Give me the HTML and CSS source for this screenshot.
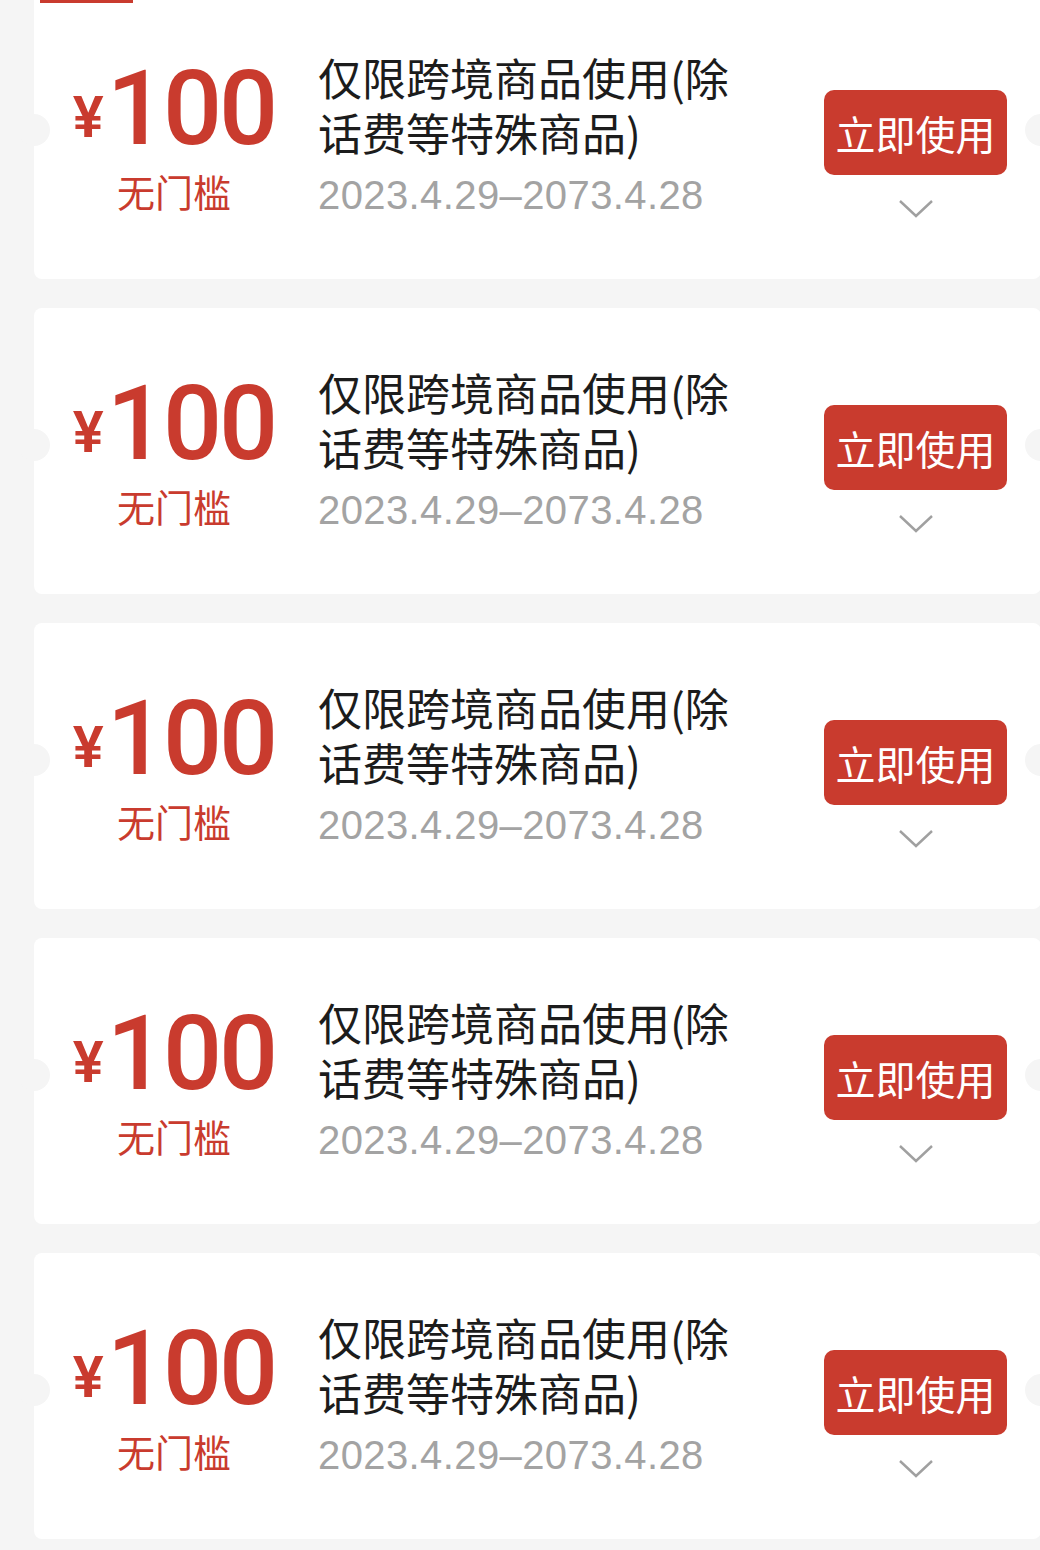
FILE: index.html
```html
<!DOCTYPE html>
<html lang="zh-CN">
<head>
    <meta charset="UTF-8">
    <meta name="viewport" content="width=device-width, initial-scale=1.0">
    <title>优惠券</title>
    <link rel="stylesheet" href="styles.css">
</head>
<body>

<div class="tab-mark"></div>

<div class="coupon-list">
    <div class="coupon">
        <div class="amount">
            <div class="price"><span class="yen">¥</span>100</div>
            <div class="limit">无门槛</div>
        </div>
        <div class="info">
            <div class="title">仅限跨境商品使用(除话费等特殊商品)</div>
            <div class="date">2023.4.29–2073.4.28</div>
        </div>
        <div class="action">
            <button class="use-btn">立即使用</button>
            <svg class="chevron" width="36" height="20" viewBox="0 0 36 20"><polyline points="2,2 18,17 34,2" fill="none" stroke="#a0a0a0" stroke-width="2.4"/></svg>
        </div>
    </div>

    <div class="coupon">
        <div class="amount">
            <div class="price"><span class="yen">¥</span>100</div>
            <div class="limit">无门槛</div>
        </div>
        <div class="info">
            <div class="title">仅限跨境商品使用(除话费等特殊商品)</div>
            <div class="date">2023.4.29–2073.4.28</div>
        </div>
        <div class="action">
            <button class="use-btn">立即使用</button>
            <svg class="chevron" width="36" height="20" viewBox="0 0 36 20"><polyline points="2,2 18,17 34,2" fill="none" stroke="#a0a0a0" stroke-width="2.4"/></svg>
        </div>
    </div>

    <div class="coupon">
        <div class="amount">
            <div class="price"><span class="yen">¥</span>100</div>
            <div class="limit">无门槛</div>
        </div>
        <div class="info">
            <div class="title">仅限跨境商品使用(除话费等特殊商品)</div>
            <div class="date">2023.4.29–2073.4.28</div>
        </div>
        <div class="action">
            <button class="use-btn">立即使用</button>
            <svg class="chevron" width="36" height="20" viewBox="0 0 36 20"><polyline points="2,2 18,17 34,2" fill="none" stroke="#a0a0a0" stroke-width="2.4"/></svg>
        </div>
    </div>

    <div class="coupon">
        <div class="amount">
            <div class="price"><span class="yen">¥</span>100</div>
            <div class="limit">无门槛</div>
        </div>
        <div class="info">
            <div class="title">仅限跨境商品使用(除话费等特殊商品)</div>
            <div class="date">2023.4.29–2073.4.28</div>
        </div>
        <div class="action">
            <button class="use-btn">立即使用</button>
            <svg class="chevron" width="36" height="20" viewBox="0 0 36 20"><polyline points="2,2 18,17 34,2" fill="none" stroke="#a0a0a0" stroke-width="2.4"/></svg>
        </div>
    </div>

    <div class="coupon">
        <div class="amount">
            <div class="price"><span class="yen">¥</span>100</div>
            <div class="limit">无门槛</div>
        </div>
        <div class="info">
            <div class="title">仅限跨境商品使用(除话费等特殊商品)</div>
            <div class="date">2023.4.29–2073.4.28</div>
        </div>
        <div class="action">
            <button class="use-btn">立即使用</button>
            <svg class="chevron" width="36" height="20" viewBox="0 0 36 20"><polyline points="2,2 18,17 34,2" fill="none" stroke="#a0a0a0" stroke-width="2.4"/></svg>
        </div>
    </div>
</div>

</body>
</html>
```

FILE: styles.css
```css
body {
    margin: 0;
    background-color: #f5f5f5;
    font-family: "Noto Sans CJK SC", sans-serif;
    overflow: hidden;
}
.tab-mark {
    position: absolute;
    top: 0;
    left: 40px;
    width: 93px;
    height: 3px;
    background-color: #c93b2e;
    z-index: 2;
}
.coupon-list {
    display: flex;
    flex-direction: column;
    gap: 29px;
    margin-top: -7px;
}
.coupon {
    position: relative;
    display: flex;
    margin-left: 34px;
    width: 1007px;
    height: 286px;
    background-color: #fff;
    border-radius: 8px;
    box-sizing: border-box;
    padding-right: 34px;
}
/* half-circle notches on both sides */
.coupon::before,
.coupon::after {
    content: "";
    position: absolute;
    top: 121px;
    width: 32px;
    height: 32px;
    border-radius: 50%;
    background-color: #f5f5f5;
}
.coupon::before {
    left: -16px;
}
.coupon::after {
    right: -16px;
}
.amount {
    width: 280px;
    padding-right: 4px;
    padding-top: 68px;
    text-align: center;
    color: #c93b2e;
}
.price {
    font-family: Roboto, "Liberation Sans", sans-serif;
    font-weight: 500;
    font-size: 104px;
    line-height: 96px;
    letter-spacing: -3px;
}
.yen {
    font-size: 58px;
    font-weight: 600;
    letter-spacing: 0;
    margin-right: 3px;
    vertical-align: 7px;
}
.limit {
    margin-top: 2px;
    font-size: 38px;
    line-height: 48px;
}
.info {
    flex: 1;
    padding-top: 57px;
}
.title {
    width: 430px;
    font-size: 44px;
    line-height: 55px;
    color: #1c1c1c;
}
.date {
    margin-top: 11px;
    font-family: "Liberation Sans", Arial, sans-serif;
    font-size: 40px;
    line-height: 48px;
    letter-spacing: 0.4px;
    color: #a3a3a3;
}
.action {
    display: flex;
    flex-direction: column;
    align-items: center;
    padding-top: 97px;
}
.use-btn {
    width: 183px;
    height: 85px;
    padding: 0;
    border: none;
    border-radius: 10px;
    background-color: #c93b2e;
    color: #fff;
    font-family: "Noto Sans CJK SC", sans-serif;
    font-size: 40px;
    cursor: pointer;
}
.chevron {
    margin-top: 24px;
}
```
